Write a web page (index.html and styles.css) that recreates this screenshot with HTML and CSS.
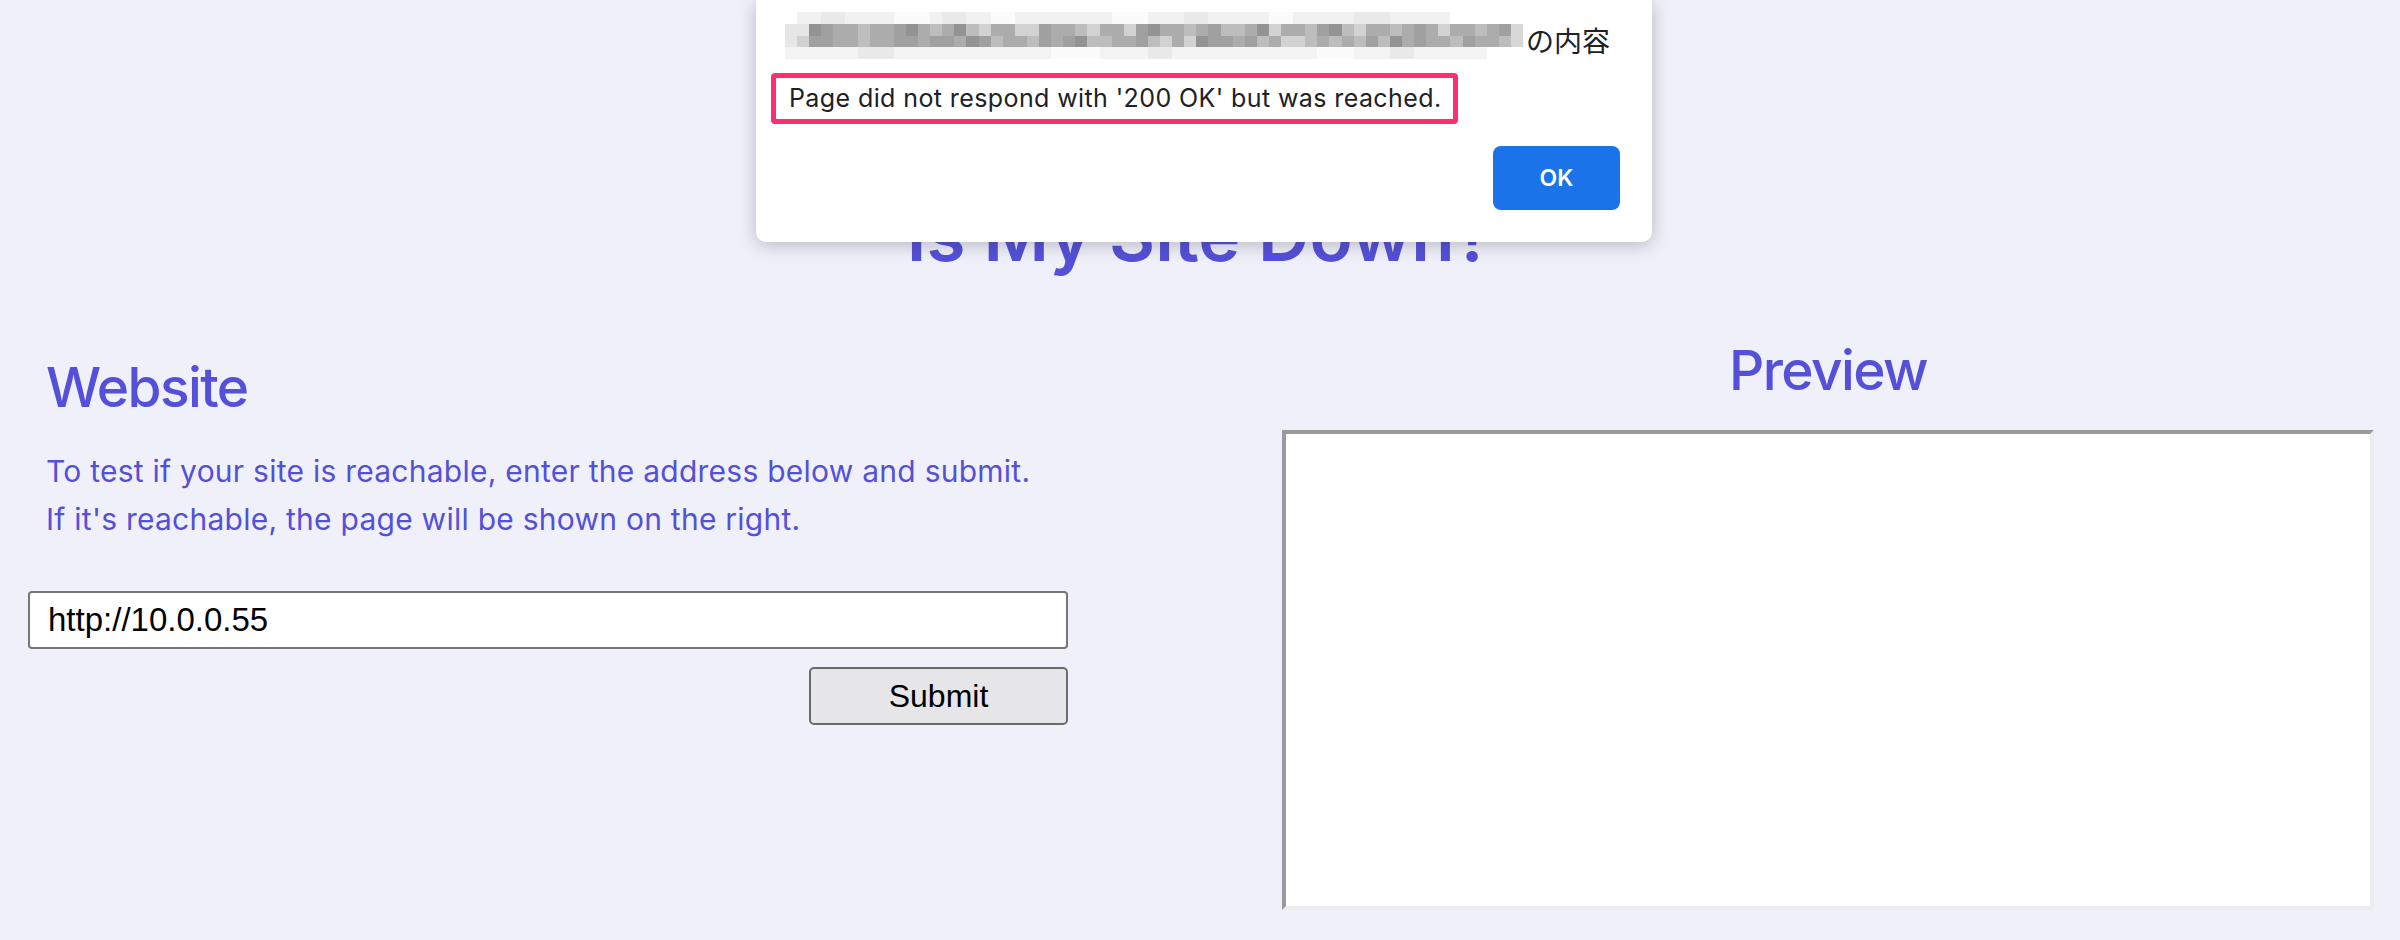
FILE: index.html
```html
<!DOCTYPE html>
<html lang="en">
<head>
<meta charset="utf-8">
<title>Is My Site Down?</title>
<link rel="stylesheet" href="styles.css">
</head>
<body>
<h1 class="title">Is My Site Down?</h1>
<main class="columns">
  <section class="left">
    <h2 class="section-title">Website</h2>
    <p class="intro">To test if your site is reachable, enter the address below and submit.<br>If it's reachable, the page will be shown on the right.</p>
    <form class="url-form">
      <input class="url-input" type="text" value="http://10.0.0.55">
      <button class="submit-btn" type="button">Submit</button>
    </form>
  </section>
  <section class="right">
    <h2 class="section-title">Preview</h2>
    <div class="preview-frame"></div>
  </section>
</main>

<div class="dialog">
  <div class="dialog-title">
    <svg class="mosaic" viewBox="0 0 61 4" preserveAspectRatio="none" shape-rendering="crispEdges">
      <rect x="1" y="0" width="54" height="1" fill="#f1f1f1"/>
      <rect x="0" y="1" width="61" height="2" fill="#acacac"/>
      <rect x="0" y="3" width="58" height="1" fill="#f3f3f3"/>
      <path fill="#fbfbfb" d="M9 0h3v1h-3zM17 0h2v1h-2zM27 0h3v1h-3zM40 0h2v1h-2zM22 3h4v1h-4zM44 3h3v1h-3z"/>
      <path fill="#e9e9e9" d="M3 0h2v1h-2zM13 0h2v1h-2zM33 0h2v1h-2zM47 0h3v1h-3zM6 3h3v1h-3zM30 3h2v1h-2zM50 3h2v1h-2z"/>
      <path fill="#939393" d="M2 1h1v1h-1zM10 1h1v1h-1zM14 1h1v1h-1zM30 1h1v1h-1zM39 1h1v1h-1zM45 1h1v1h-1zM15 2h1v1h-1zM24 2h1v1h-1zM34 2h1v1h-1zM50 2h1v1h-1z"/>
      <path fill="#a0a0a0" d="M3 1h1v1h-1zM9 1h1v1h-1zM21 1h1v1h-1zM29 1h1v1h-1zM35 1h1v1h-1zM44 1h1v1h-1zM52 1h1v1h-1zM59 1h1v1h-1zM2 2h2v1h-2zM9 2h2v1h-2zM12 2h2v1h-2zM16 2h1v1h-1zM21 2h1v1h-1zM23 2h1v1h-1zM29 2h1v1h-1zM35 2h2v1h-2zM38 2h1v1h-1zM48 2h1v1h-1zM52 2h1v1h-1zM56 2h1v1h-1z"/>
      <path fill="#bdbdbd" d="M6 1h1v1h-1zM12 1h1v1h-1zM15 1h1v1h-1zM24 1h1v1h-1zM33 1h1v1h-1zM36 1h2v1h-2zM43 1h1v1h-1zM46 1h1v1h-1zM50 1h1v1h-1zM57 1h1v1h-1zM6 2h1v1h-1zM17 2h1v1h-1zM20 2h1v1h-1zM25 2h2v1h-2zM30 2h1v1h-1zM39 2h1v1h-1zM43 2h1v1h-1zM45 2h1v1h-1zM47 2h1v1h-1zM49 2h1v1h-1zM55 2h1v1h-1zM59 2h1v1h-1z"/>
      <path fill="#d2d2d2" d="M16 1h1v1h-1zM19 1h2v1h-2zM25 1h1v1h-1zM28 1h1v1h-1zM40 1h1v1h-1zM47 1h1v1h-1zM54 1h1v1h-1zM1 2h1v1h-1zM31 2h1v1h-1zM33 2h1v1h-1zM41 2h2v1h-2z"/>
      <path fill="#e6e6e6" d="M0 1h2v1h-2zM0 2h1v1h-1z"/>
      <path fill="#d8d8d8" d="M60 1h1v2h-1z"/>
    </svg>
    <span class="dialog-title-text">の内容</span>
  </div>
  <div class="dialog-message"><span class="message-box">Page did not respond with '200 OK' but was reached.</span></div>
  <div class="dialog-actions">
    <button class="ok-btn" type="button">OK</button>
  </div>
</div>
</body>
</html>
```

FILE: styles.css
```css
* {
  box-sizing: border-box;
}

body {
  margin: 0;
  background: #f0f0fa;
  font-family: Inter, "Noto Sans", sans-serif;
  color: #5450d8;
}

.title {
  margin: 192px 0 0;
  text-align: center;
  font-size: 71px;
  line-height: 86px;
  font-weight: 600;
  color: #5450d8;
}

.columns {
  display: flex;
  padding: 0 26px 0 28px;
  margin-top: 59px;
}

.left {
  flex: none;
  width: 1040px;
  padding-top: 17px;
}

.section-title {
  margin: 0;
  font-size: 55px;
  line-height: 66px;
  font-weight: 500;
  letter-spacing: -1.6px;
  color: #5450d8;
}

.left .section-title,
.intro {
  padding-left: 18px;
}

.intro {
  margin: 27px 0 0;
  font-size: 30px;
  line-height: 48px;
  letter-spacing: 0.25px;
}

.url-form {
  margin-top: 48px;
  display: flex;
  flex-direction: column;
  align-items: flex-end;
}

.url-input {
  width: 1040px;
  height: 58px;
  border: 2px solid #767676;
  border-radius: 4px;
  padding: 0 18px;
  background: #fff;
  color: #000;
  font-family: "Liberation Sans", Arial, sans-serif;
  font-size: 33px;
}

.submit-btn {
  margin-top: 18px;
  width: 259px;
  height: 58px;
  border: 2px solid #6b6b6b;
  border-radius: 5px;
  background: #e6e6e8;
  color: #000;
  font-family: "Liberation Sans", Arial, sans-serif;
  font-size: 32px;
}

.right {
  flex: 1;
  margin-left: 214px;
  text-align: center;
}

.preview-frame {
  margin-top: 27px;
  height: 480px;
  background: #fff;
  border-width: 4px;
  border-style: solid;
  border-color: #9a9a9a #ececec #ececec #9a9a9a;
}

/* Browser alert dialog overlaying the page */
.dialog {
  position: absolute;
  top: 0;
  left: 756px;
  width: 896px;
  height: 242px;
  background: #fff;
  border-radius: 0 0 10px 10px;
  box-shadow: 0 3px 18px rgba(40, 40, 60, 0.28);
  padding: 12px 32px 0 15px;
  font-family: Inter, "Noto Sans CJK JP", sans-serif;
  color: #202124;
}

.dialog-title {
  display: flex;
  align-items: center;
  height: 47px;
  padding-left: 14px;
}

.mosaic {
  width: 738px;
  height: 47px;
  display: block;
}

.dialog-title-text {
  margin-left: 3px;
  font-family: "Noto Sans CJK JP", sans-serif;
  font-size: 28px;
  line-height: 32px;
  padding-top: 8px;
}

.dialog-message {
  margin-top: 14px;
}

.message-box {
  display: inline-block;
  border: 5px solid #fd2f6c;
  border-radius: 4px;
  padding: 0 12px 0 13px;
  font-size: 25px;
  line-height: 41px;
  letter-spacing: 0.4px;
}

.dialog-actions {
  display: flex;
  justify-content: flex-end;
  margin-top: 22px;
}

.ok-btn {
  width: 127px;
  height: 64px;
  border: none;
  border-radius: 8px;
  background: #1a73e8;
  color: #fff;
  font-family: Inter, sans-serif;
  font-size: 23px;
  font-weight: 600;
}
```
